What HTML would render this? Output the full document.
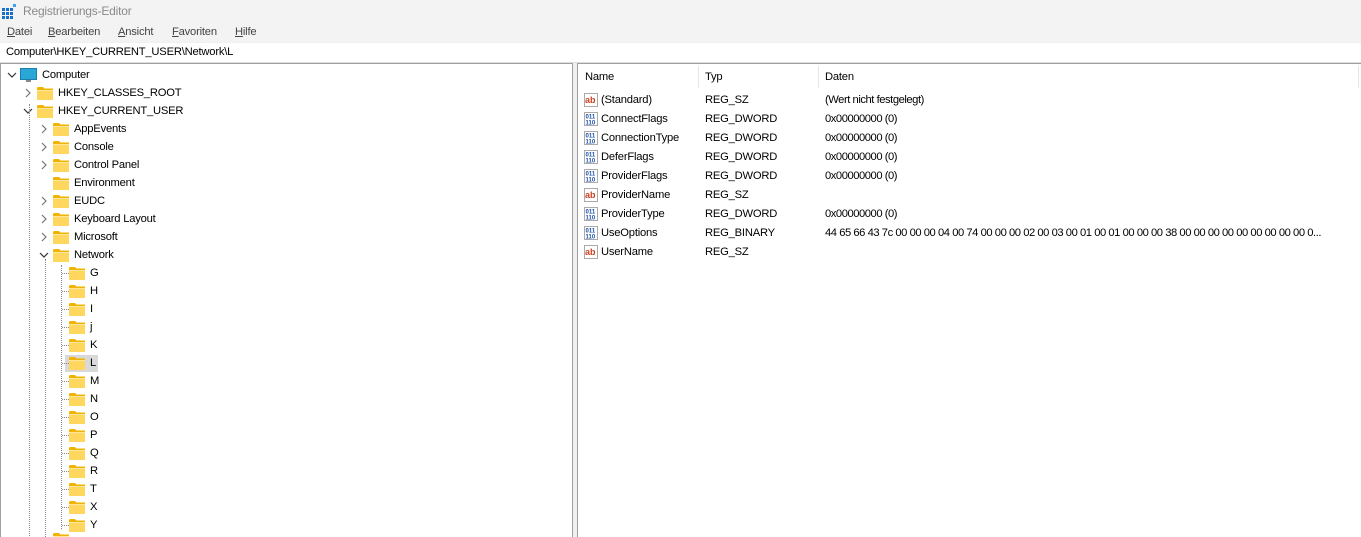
<!DOCTYPE html>
<html style="overflow:hidden"><head><meta charset="utf-8"><style>
*{margin:0;padding:0;box-sizing:border-box}
html,body{width:1361px;height:537px;overflow:hidden}
body{background:#f0f0f0;font-family:"Liberation Sans",sans-serif;font-size:11.2px;letter-spacing:-0.2px;color:#000;position:relative}
.abs{position:absolute}
.title{left:0;top:0;width:1361px;height:22px;background:#f3f3f3;color:#8a8a8a;font-size:12px}
.menu{left:0;top:22px;width:1361px;height:20px;background:#f3f3f3;color:#444}
.menu span{position:absolute;top:4px}
.addr{left:0;top:43px;width:1361px;height:20px;background:#fff;border-bottom:1px solid #ddd}
.tree{left:0;top:63px;width:573px;height:474px;background:#fff;border-top:1px solid #a0a0a0;border-left:1px solid #a0a0a0;border-right:1px solid #a0a0a0;overflow:hidden}
.list{left:577px;top:63px;width:784px;height:474px;background:#fff;border-top:1px solid #a0a0a0;border-left:1px solid #a0a0a0;overflow:hidden}
.t{position:absolute;white-space:nowrap}
.fold{position:absolute;width:16px;height:13px}
.vd{position:absolute;border-left:1px dotted #888;width:0}
.hd{position:absolute;border-top:1px dotted #888;height:0}
.hdr{position:absolute;top:7px}
</style></head><body>
<div class="abs title">
<svg class="abs" style="left:2px;top:4px" width="15" height="15" viewBox="0 0 15 15"><g fill="#1a6fc9"><rect x="0" y="4" width="3" height="3"/><rect x="4" y="4" width="3" height="3"/><rect x="8" y="4" width="3" height="3"/><rect x="0" y="8" width="3" height="3"/><rect x="4" y="8" width="3" height="3"/><rect x="8" y="8" width="3" height="3"/><rect x="0" y="12" width="3" height="3"/><rect x="4" y="12" width="3" height="3"/><rect x="8" y="12" width="3" height="3"/><rect x="11" y="0" width="3" height="3" fill="#3aa0f0"/></g></svg>
<span class="abs" style="left:23px;top:4px">Registrierungs-Editor</span></div>
<div class="abs menu"><span style="left:7px"><u>D</u>atei</span><span style="left:48px"><u>B</u>earbeiten</span><span style="left:118px"><u>A</u>nsicht</span><span style="left:172px"><u>F</u>avoriten</span><span style="left:235px"><u>H</u>ilfe</span></div>
<div class="abs addr"><span class="abs" style="left:6px;top:3px">Computer\HKEY_CURRENT_USER\Network\L</span></div>
<div class="abs tree" id="tree"></div>
<div class="abs list" id="list">
<div class="hdr" style="left:7px">Name</div><div class="hdr" style="left:127px">Typ</div><div class="hdr" style="left:247px">Daten</div>
<div class="abs" style="left:120px;top:2px;height:22px;border-left:1px solid #e5e5e5"></div>
<div class="abs" style="left:240px;top:2px;height:22px;border-left:1px solid #e5e5e5"></div>
<div class="abs" style="left:780px;top:2px;height:22px;border-left:1px solid #e5e5e5"></div>
</div>
<script>
var F='<svg width="16" height="13" viewBox="0 0 16 13"><path d="M0 1.5Q0 0 1.5 0H6L7.5 1.5H16V13H0Z" fill="#f0b400"/><rect x="0" y="3" width="16" height="10" fill="#ffd75e"/><rect x="0" y="3" width="16" height="1" fill="#ffe89a"/></svg>';
var tr=document.getElementById('tree'),h='';
function row(i,lvl,txt,ch,icon,sel){var y=i*18+2;var x0=12+lvl*16;
if(ch==1)h+='<svg class="abs" style="left:'+(x0-6)+'px;top:'+(y+4)+'px" width="10" height="10"><path d="M3 1L7 5L3 9" stroke="#777" fill="none" stroke-width="1.2"/></svg>';
if(ch==2)h+='<svg class="abs" style="left:'+(x0-6)+'px;top:'+(y+4)+'px" width="10" height="10"><path d="M1 3L5 7L9 3" stroke="#333" fill="none" stroke-width="1.2"/></svg>';
if(sel)h+='<div class="abs" style="left:'+(x0+4)+'px;top:'+(y+1)+'px;width:33px;height:17px;background:#d9d9d9"></div>';
if(icon=='pc')h+='<svg class="abs" style="left:19px;top:'+(y+2)+'px" width="17" height="15"><rect x="0.5" y="0.5" width="16" height="11" fill="#29a8d8" stroke="#1d7fa8"/><rect x="6" y="12" width="5" height="2" fill="#888"/></svg>';
else h+='<div class="fold" style="left:'+(x0+8)+'px;top:'+(y+3)+'px">'+F+'</div>';
h+='<span class="t" style="left:'+(x0+29)+'px;top:'+(y+3)+'px">'+txt+'</span>';}
row(0,0,'Computer',2,'pc');row(1,1,'HKEY_CLASSES_ROOT',1);row(2,1,'HKEY_CURRENT_USER',2);
var l2=['AppEvents',1,'Console',1,'Control Panel',1,'Environment',0,'EUDC',1,'Keyboard Layout',1,'Microsoft',1,'Network',2];
for(var k=0;k<l2.length;k+=2)row(3+k/2,2,l2[k],l2[k+1]);
var l3='GHIjKLMNOPQRTXY';for(var k=0;k<l3.length;k++){row(11+k,3,l3[k],0,null,l3[k]=='L');h+='<div class="hd" style="left:61px;top:'+((11+k)*18+11)+'px;width:7px"></div>';}
h+='<div class="vd" style="left:28px;top:40px;height:440px"></div><div class="vd" style="left:44px;top:195px;height:280px"></div><div class="vd" style="left:60px;top:201px;height:264px"></div>';
h+='<div class="fold" style="left:52px;top:469px">'+F+'</div>';
tr.innerHTML=h;
var L=document.getElementById('list'),g='';
var d=[['(Standard)','REG_SZ','(Wert nicht festgelegt)',0],['ConnectFlags','REG_DWORD','0x00000000 (0)',1],['ConnectionType','REG_DWORD','0x00000000 (0)',1],['DeferFlags','REG_DWORD','0x00000000 (0)',1],['ProviderFlags','REG_DWORD','0x00000000 (0)',1],['ProviderName','REG_SZ','',0],['ProviderType','REG_DWORD','0x00000000 (0)',1],['UseOptions','REG_BINARY','44 65 66 43 7c 00 00 00 04 00 74 00 00 00 02 00 03 00 01 00 01 00 00 00 38 00 00 00 00 00 00 00 00 00 0...',1],['UserName','REG_SZ','',0]];
for(var i=0;i<d.length;i++){var y=29+i*19;
if(d[i][3])g+='<svg class="abs" style="left:6px;top:'+y+'px" width="14" height="14"><rect x="0.5" y="0.5" width="13" height="13" fill="#fff" stroke="#aaa"/><text x="1.5" y="6.5" font-size="6" font-weight="bold" fill="#1b4fa8" font-family="Liberation Sans" letter-spacing="0">011</text><text x="1.5" y="12.5" font-size="6" font-weight="bold" fill="#1b4fa8" font-family="Liberation Sans" letter-spacing="0">110</text></svg>';
else g+='<svg class="abs" style="left:6px;top:'+y+'px" width="14" height="14"><rect x="0.5" y="0.5" width="13" height="13" fill="#fff" stroke="#aaa"/><text x="1" y="10" font-size="9" font-weight="bold" fill="#d04020" font-family="Liberation Sans" letter-spacing="0">ab</text></svg>';
g+='<span class="t" style="left:23px;top:'+(y+1)+'px">'+d[i][0]+'</span><span class="t" style="left:127px;top:'+(y+1)+'px">'+d[i][1]+'</span><span class="t" style="left:247px;top:'+(y+1)+'px;max-width:528px;overflow:hidden;letter-spacing:-0.45px">'+d[i][2]+'</span>';}
L.innerHTML+=g;
</script>
</body></html>
